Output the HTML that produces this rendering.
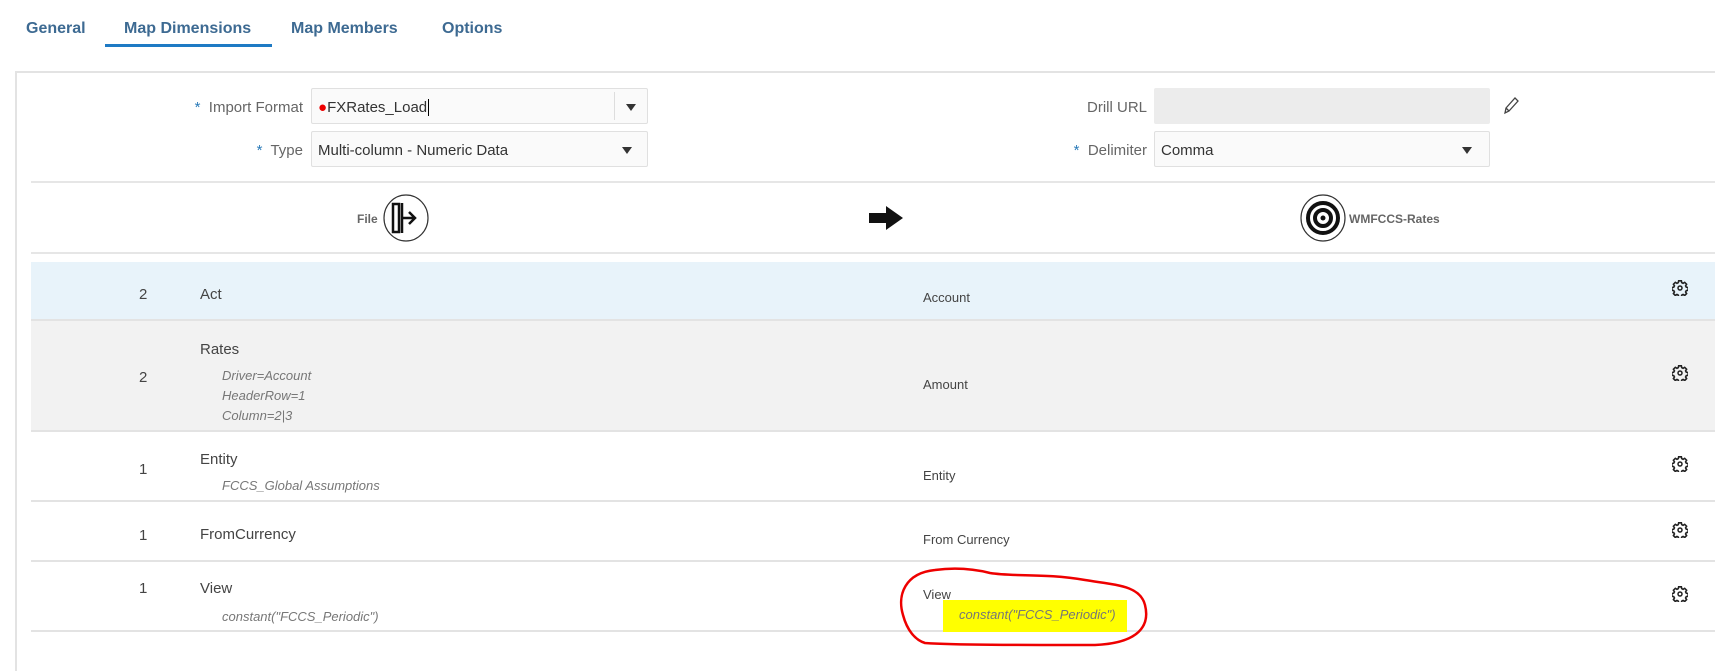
<!DOCTYPE html>
<html><head><meta charset="utf-8"><style>
*{margin:0;padding:0;box-sizing:border-box}
body{width:1715px;height:656px;background:#fff;font-family:"Liberation Sans",sans-serif;position:relative;overflow:hidden;color:#333}
.a{position:absolute;white-space:nowrap}
.tab{font-size:16px;font-weight:bold;color:#3d6a92;top:20px}
.lbl{font-size:15px;color:#666;text-align:right}
.star{color:#2a7ab8}
.box{position:absolute;border:1px solid #e0e0e0;background:#fafafa;border-radius:2px;font-size:15px;color:#333;padding:10px 6px 6px}
.tri{position:absolute;width:0;height:0;border-left:5px solid transparent;border-right:5px solid transparent;border-top:7px solid #333}
.hl{position:absolute;left:31px;right:0;height:2px;background:#e6e6e6}
.row{position:absolute;left:31px;right:0;border-bottom:2px solid #e3e3e3}
.n{font-size:15px;color:#444}
.s{font-size:13px;color:#777;font-style:italic}
.t{font-size:13px;color:#444}
.g{position:absolute;left:1672px}
</style></head><body>
<div class="a tab" style="left:26px">General</div>
<div class="a tab" style="left:124px">Map Dimensions</div>
<div class="a" style="left:105px;top:44px;width:167px;height:3px;background:#1e7ac4"></div>
<div class="a tab" style="left:291px">Map Members</div>
<div class="a tab" style="left:442px">Options</div>

<div class="a" style="left:15px;top:71px;width:1700px;height:600px;border-top:2px solid #e3e3e3;border-left:2px solid #e3e3e3"></div>

<div class="a lbl" style="left:150px;width:153px;top:99px"><span class="star">*</span>&nbsp; Import Format</div>
<div class="box" style="left:311px;top:88px;width:337px;height:36px"><span style="color:#e00;font-weight:bold">&#9679;</span>FXRates_Load<span style="border-left:1px solid #000;margin-left:1px"></span></div>
<div class="a" style="left:614px;top:92px;width:1px;height:28px;background:#ddd"></div>
<div class="tri" style="left:626px;top:104px"></div>
<div class="a lbl" style="left:200px;width:103px;top:142px"><span class="star">*</span>&nbsp; Type</div>
<div class="box" style="left:311px;top:131px;width:337px;height:36px">Multi-column - Numeric Data</div>
<div class="tri" style="left:622px;top:147px"></div>

<div class="a lbl" style="left:1000px;width:147px;top:99px">Drill URL</div>
<div class="box" style="left:1154px;top:88px;width:336px;height:36px;background:#ececec;border-color:#ececec"></div>
<svg class="a" style="left:1502px;top:96px" width="18" height="20" viewBox="0 0 18 20"><path d="M3 17 L4 12 L13 2 L16 5 L7 15 Z M4 12 L7 15" fill="none" stroke="#444" stroke-width="1.3"/></svg>
<div class="a lbl" style="left:1000px;width:147px;top:142px"><span class="star">*</span>&nbsp; Delimiter</div>
<div class="box" style="left:1154px;top:131px;width:336px;height:36px">Comma</div>
<div class="tri" style="left:1462px;top:147px"></div>

<div class="hl" style="top:181px"></div>
<div class="hl" style="top:252px"></div>

<div class="a" style="left:357px;top:212px;font-size:12px;font-weight:bold;color:#666">File</div>
<svg class="a" style="left:382px;top:194px" width="48" height="48" viewBox="0 0 48 48"><ellipse cx="24" cy="24" rx="22" ry="23" fill="#fff" stroke="#333" stroke-width="1.2"/><rect x="11" y="10" width="6" height="28" fill="none" stroke="#111" stroke-width="2.5"/><path d="M20 9 V39 M20 24 H32 M27 18 L33 24 L27 30" fill="none" stroke="#111" stroke-width="2.5"/></svg>
<svg class="a" style="left:868px;top:205px" width="36" height="26" viewBox="0 0 36 26"><path d="M1 8 H18 V1 L35 13 L18 25 V18 H1 Z" fill="#111"/></svg>
<svg class="a" style="left:1299px;top:194px" width="48" height="48" viewBox="0 0 48 48"><ellipse cx="24" cy="24" rx="22" ry="23" fill="#fff" stroke="#333" stroke-width="1.2"/><circle cx="24" cy="24" r="15" fill="none" stroke="#111" stroke-width="4"/><circle cx="24" cy="24" r="8" fill="none" stroke="#111" stroke-width="4"/><circle cx="24" cy="24" r="2.5" fill="#111"/></svg>
<div class="a" style="left:1349px;top:212px;font-size:12px;font-weight:bold;color:#666">WMFCCS-Rates</div>

<div class="row" style="top:262px;height:59px;background:#e8f3fa"></div>
<div class="row" style="top:321px;height:111px;background:#f2f2f2"></div>
<div class="row" style="top:432px;height:70px"></div>
<div class="row" style="top:502px;height:60px"></div>
<div class="row" style="top:562px;height:70px"></div>

<div class="a n" style="left:139px;top:286px">2</div>
<div class="a n" style="left:200px;top:286px">Act</div>
<div class="a t" style="left:923px;top:290px">Account</div>

<div class="a n" style="left:139px;top:369px">2</div>
<div class="a n" style="left:200px;top:341px">Rates</div>
<div class="a s" style="left:222px;top:368px">Driver=Account</div>
<div class="a s" style="left:222px;top:388px">HeaderRow=1</div>
<div class="a s" style="left:222px;top:408px">Column=2|3</div>
<div class="a t" style="left:923px;top:377px">Amount</div>

<div class="a n" style="left:139px;top:461px">1</div>
<div class="a n" style="left:200px;top:451px">Entity</div>
<div class="a s" style="left:222px;top:478px">FCCS_Global Assumptions</div>
<div class="a t" style="left:923px;top:468px">Entity</div>

<div class="a n" style="left:139px;top:527px">1</div>
<div class="a n" style="left:200px;top:526px">FromCurrency</div>
<div class="a t" style="left:923px;top:532px">From Currency</div>

<div class="a n" style="left:139px;top:580px">1</div>
<div class="a n" style="left:200px;top:580px">View</div>
<div class="a s" style="left:222px;top:609px">constant("FCCS_Periodic")</div>
<div class="a t" style="left:923px;top:587px">View</div>
<div class="a" style="left:943px;top:600px;width:184px;height:32px;background:#ffff00"></div>
<div class="a s" style="left:959px;top:607px;color:#777">constant("FCCS_Periodic")</div>
<svg class="a" style="left:895px;top:565px" width="256" height="85" viewBox="0 0 256 85"><path d="M40 5 C10 8 2 30 8 50 C12 65 20 75 30 78 C60 80 120 80 200 80 C245 78 255 60 250 40 C245 20 220 20 190 15 C150 8 120 12 95 8 C75 3 55 3 40 5 Z" fill="none" stroke="#e00" stroke-width="2.5"/></svg>

<svg class="g" style="top:280px" width="16" height="16" viewBox="0 0 16 16"><path d="M6.5 1h3l.4 2 1.5.8 1.8-1.1 2.1 2.1-1.1 1.8.8 1.5 2 .4v3l-2 .4-.8 1.5 1.1 1.8-2.1 2.1-1.8-1.1-1.5.8-.4 2h-3l-.4-2-1.5-.8-1.8 1.1-2.1-2.1 1.1-1.8-.8-1.5-2-.4v-3l2-.4.8-1.5-1.1-1.8 2.1-2.1 1.8 1.1 1.5-.8z" transform="scale(0.9) translate(0.9 -0.1)" fill="none" stroke="#222" stroke-width="1.8"/><circle cx="8" cy="8" r="2" fill="none" stroke="#222" stroke-width="1.5"/></svg>
<svg class="g" style="top:365px" width="16" height="16" viewBox="0 0 16 16"><path d="M6.5 1h3l.4 2 1.5.8 1.8-1.1 2.1 2.1-1.1 1.8.8 1.5 2 .4v3l-2 .4-.8 1.5 1.1 1.8-2.1 2.1-1.8-1.1-1.5.8-.4 2h-3l-.4-2-1.5-.8-1.8 1.1-2.1-2.1 1.1-1.8-.8-1.5-2-.4v-3l2-.4.8-1.5-1.1-1.8 2.1-2.1 1.8 1.1 1.5-.8z" transform="scale(0.9) translate(0.9 -0.1)" fill="none" stroke="#222" stroke-width="1.8"/><circle cx="8" cy="8" r="2" fill="none" stroke="#222" stroke-width="1.5"/></svg>
<svg class="g" style="top:456px" width="16" height="16" viewBox="0 0 16 16"><path d="M6.5 1h3l.4 2 1.5.8 1.8-1.1 2.1 2.1-1.1 1.8.8 1.5 2 .4v3l-2 .4-.8 1.5 1.1 1.8-2.1 2.1-1.8-1.1-1.5.8-.4 2h-3l-.4-2-1.5-.8-1.8 1.1-2.1-2.1 1.1-1.8-.8-1.5-2-.4v-3l2-.4.8-1.5-1.1-1.8 2.1-2.1 1.8 1.1 1.5-.8z" transform="scale(0.9) translate(0.9 -0.1)" fill="none" stroke="#222" stroke-width="1.8"/><circle cx="8" cy="8" r="2" fill="none" stroke="#222" stroke-width="1.5"/></svg>
<svg class="g" style="top:522px" width="16" height="16" viewBox="0 0 16 16"><path d="M6.5 1h3l.4 2 1.5.8 1.8-1.1 2.1 2.1-1.1 1.8.8 1.5 2 .4v3l-2 .4-.8 1.5 1.1 1.8-2.1 2.1-1.8-1.1-1.5.8-.4 2h-3l-.4-2-1.5-.8-1.8 1.1-2.1-2.1 1.1-1.8-.8-1.5-2-.4v-3l2-.4.8-1.5-1.1-1.8 2.1-2.1 1.8 1.1 1.5-.8z" transform="scale(0.9) translate(0.9 -0.1)" fill="none" stroke="#222" stroke-width="1.8"/><circle cx="8" cy="8" r="2" fill="none" stroke="#222" stroke-width="1.5"/></svg>
<svg class="g" style="top:586px" width="16" height="16" viewBox="0 0 16 16"><path d="M6.5 1h3l.4 2 1.5.8 1.8-1.1 2.1 2.1-1.1 1.8.8 1.5 2 .4v3l-2 .4-.8 1.5 1.1 1.8-2.1 2.1-1.8-1.1-1.5.8-.4 2h-3l-.4-2-1.5-.8-1.8 1.1-2.1-2.1 1.1-1.8-.8-1.5-2-.4v-3l2-.4.8-1.5-1.1-1.8 2.1-2.1 1.8 1.1 1.5-.8z" transform="scale(0.9) translate(0.9 -0.1)" fill="none" stroke="#222" stroke-width="1.8"/><circle cx="8" cy="8" r="2" fill="none" stroke="#222" stroke-width="1.5"/></svg>
</body></html>
